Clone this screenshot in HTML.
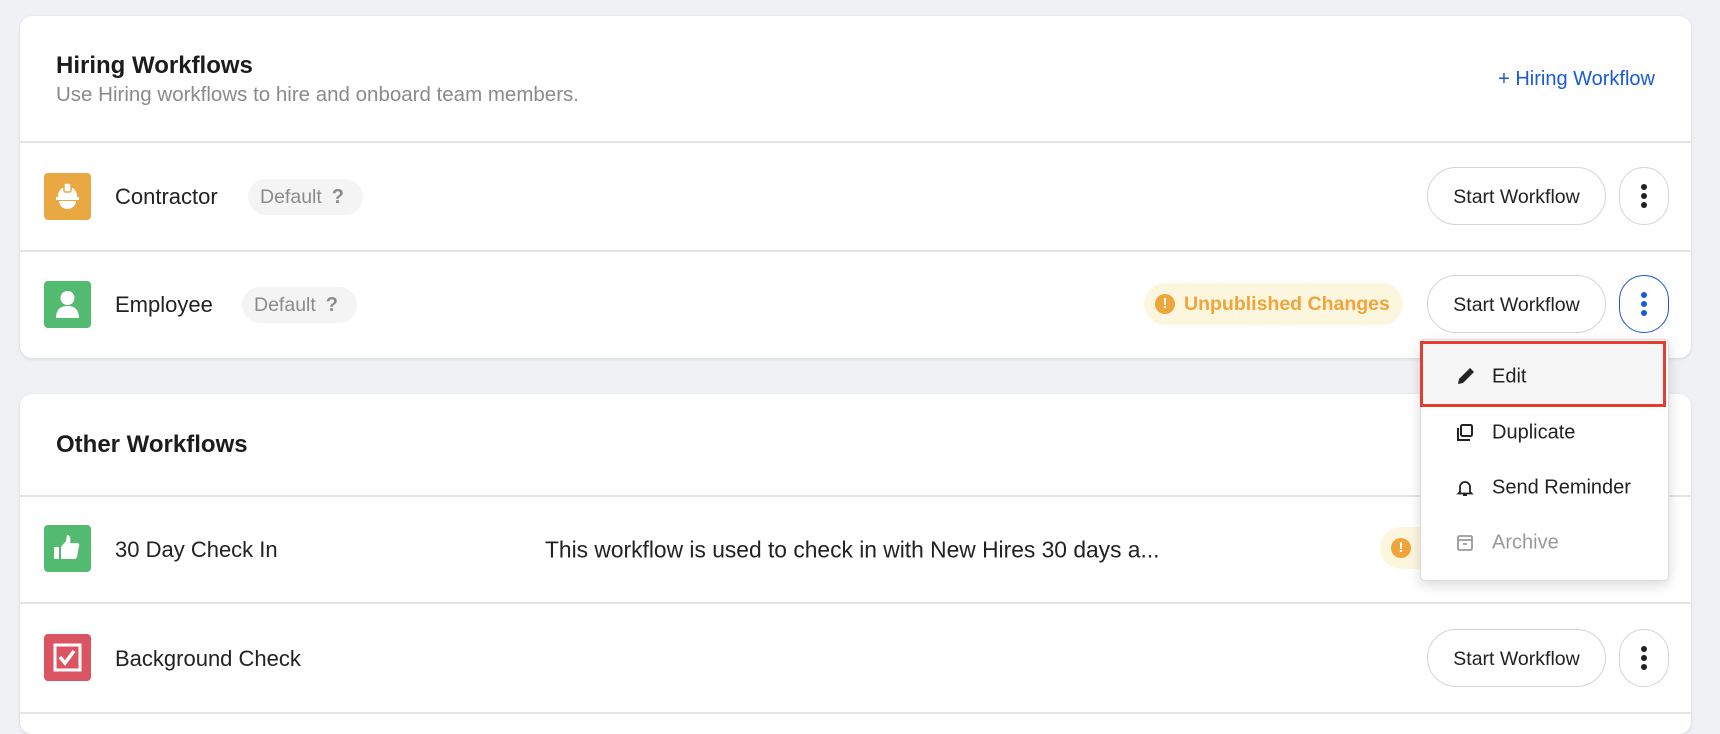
<!DOCTYPE html>
<html><head><meta charset="utf-8"><style>
*{box-sizing:border-box;margin:0;padding:0}
body{width:1720px;height:723px;background:#f0f1f4;font-family:"Liberation Sans",sans-serif;color:#222;position:relative;overflow:hidden}
.card{position:absolute;left:20px;width:1671px;background:#fff;border-radius:12px;box-shadow:0 1px 3px rgba(0,0,0,.12)}
.abs{position:absolute}
.h{font-weight:bold;font-size:24px;color:#1c1c1c}
.div{position:absolute;left:0;right:0;height:2px;background:#e3e4e7}
.icon{position:absolute;left:24px;width:47px;height:47px;border-radius:4px}
.name{position:absolute;left:95px;font-size:22px;color:#222;transform:translateY(-50%)}
.pill{position:absolute;height:36px;border-radius:18px;background:#f4f4f5;color:#8a8a8a;font-size:19.5px;line-height:36px;padding-left:12px;transform:translateY(-50%);width:115px}
.pill b{color:#8a8a8a;margin-left:10px;font-size:20px}
.btn{position:absolute;left:1407px;width:179px;height:58px;border:1.5px solid #d4d4d6;border-radius:29px;font-size:19.5px;text-align:center;line-height:59px;color:#222;transform:translateY(-50%)}
.keb{position:absolute;left:1599px;width:50px;height:58px;border:1.5px solid #d4d4d6;border-radius:25px;transform:translateY(-50%)}
.keb i{position:absolute;left:21px;width:6px;height:6px;border-radius:50%;background:#222}
.warn{position:absolute;height:42px;border-radius:21px;background:#fdf6df;color:#f0a53a;font-weight:bold;font-size:19.5px;line-height:43px;padding-left:40px;transform:translateY(-50%)}
.warn:before{content:"!";position:absolute;left:11px;top:11px;width:20px;height:20px;border-radius:50%;background:#f0a53a;color:#fff;font-size:15px;line-height:20px;text-align:center}
.menu{position:absolute;left:1420px;top:339px;width:249px;height:242px;background:#fff;border:1px solid #dcdcde;border-radius:5px;box-shadow:0 4px 12px rgba(0,0,0,.15)}
.mi{position:absolute;left:71px;font-size:20px;color:#222;transform:translateY(-50%)}
.mic{position:absolute;left:34px;transform:translateY(-50%)}
</style></head><body>
<div class="card" style="top:16px;height:342px">
 <div class="abs h" style="left:36px;top:36px">Hiring Workflows</div>
 <div class="abs" style="left:36px;top:67px;font-size:20.5px;color:#8a8a8a">Use Hiring workflows to hire and onboard team members.</div>
 <div class="abs" style="right:36px;top:52px;font-size:20px;color:#1a5ad7">+ Hiring Workflow</div>
 <div class="div" style="top:125px"></div>
 <div class="icon" style="top:157px;background:#eaa843"><svg width="47" height="47" viewBox="0 0 47 47"><path d="M14 23a9.5 9.5 0 0 1 19 0v1H14z" fill="#fff"/><rect x="20" y="10" width="7" height="9" rx="1.5" fill="#fff" stroke="#eaa843" stroke-width="1.5"/><rect x="12" y="24" width="23" height="3" fill="#fff"/><path d="M15 28h17a8.5 8 0 0 1-17 0z" fill="#fff"/></svg></div>
 <div class="name" style="top:181px">Contractor</div>
 <div class="pill" style="left:228px;top:181px">Default<b>?</b></div>
 <div class="btn" style="top:180px">Start Workflow</div>
 <div class="keb" style="top:180px"><i style="top:16px"></i><i style="top:25px"></i><i style="top:34px"></i></div>
 <div class="div" style="top:234px"></div>
 <div class="icon" style="top:265px;background:#52bb6f"><svg width="47" height="47" viewBox="0 0 47 47"><circle cx="23.5" cy="17" r="7" fill="#fff"/><path d="M12 37c0-9 5-12 11.5-12S35 28 35 37z" fill="#fff"/></svg></div>
 <div class="name" style="top:289px">Employee</div>
 <div class="pill" style="left:222px;top:289px">Default<b>?</b></div>
 <div class="warn" style="left:1124px;top:288px;width:259px">Unpublished Changes</div>
 <div class="btn" style="top:288px">Start Workflow</div>
 <div class="keb" style="top:288px;border-color:#1a5ad7"><i style="top:16px;background:#1a5ad7"></i><i style="top:25px;background:#1a5ad7"></i><i style="top:34px;background:#1a5ad7"></i></div>
</div>
<div class="card" style="top:394px;height:340px">
 <div class="abs h" style="left:36px;top:37px">Other Workflows</div>
 <div class="div" style="top:101px"></div>
 <div class="icon" style="top:131px;background:#52bb6f"><svg width="47" height="47" viewBox="0 0 47 47"><rect x="10" y="22" width="5" height="12" fill="#fff"/><path d="M17 22l5-6 1-6c3 0 4 3 3 8h7c2 0 3 2 2 3l-2 11c-1 2-2 2-3 2H17z" fill="#fff"/></svg></div>
 <div class="name" style="top:156px">30 Day Check In</div>
 <div class="abs" style="left:525px;top:156px;font-size:22.8px;transform:translateY(-50%)">This workflow is used to check in with New Hires 30 days a...</div>
 <div class="warn" style="left:1360px;top:154px;width:200px"></div>
 <div class="div" style="top:208px"></div>
 <div class="icon" style="top:240px;background:#db5461"><svg width="47" height="47" viewBox="0 0 47 47"><rect x="11" y="11" width="25" height="25" fill="none" stroke="#fff" stroke-width="3"/><path d="M16 23l5 6 9-12" fill="none" stroke="#fff" stroke-width="3.5"/></svg></div>
 <div class="name" style="top:265px">Background Check</div>
 <div class="btn" style="top:264px">Start Workflow</div>
 <div class="keb" style="top:264px"><i style="top:16px"></i><i style="top:25px"></i><i style="top:34px"></i></div>
 <div class="div" style="top:318px"></div>
</div>
<div class="menu">
 <div class="abs" style="left:-1px;top:1px;width:246px;height:66px;background:#f6f6f6;border:3px solid #e43d2f"></div>
 <svg class="mic" style="top:37px" width="20" height="20" viewBox="0 0 20 20"><path d="M3 17l1-5 9-9 4 4-9 9z" fill="#222"/><path d="M13 3l2-2 4 4-2 2z" fill="#222"/></svg>
 <div class="mi" style="top:37px">Edit</div>
 <svg class="mic" style="top:93px" width="20" height="20" viewBox="0 0 20 20"><rect x="6" y="2" width="11" height="11" rx="1.5" fill="none" stroke="#222" stroke-width="2"/><path d="M4 6H3v11h11v-1" fill="none" stroke="#222" stroke-width="2"/></svg>
 <div class="mi" style="top:93px">Duplicate</div>
 <svg class="mic" style="top:148px" width="20" height="20" viewBox="0 0 20 20"><path d="M5 14V9a5 5 0 0 1 10 0v5l1.5 1.5h-13z" fill="none" stroke="#222" stroke-width="1.8"/><path d="M8 17h4" stroke="#222" stroke-width="2"/></svg>
 <div class="mi" style="top:148px">Send Reminder</div>
 <svg class="mic" style="top:203px" width="20" height="20" viewBox="0 0 20 20"><rect x="3" y="3" width="14" height="14" rx="1.5" fill="none" stroke="#999" stroke-width="1.8"/><path d="M3 7h14M8 11h4" stroke="#999" stroke-width="1.8"/></svg>
 <div class="mi" style="top:203px;color:#999">Archive</div>
</div>
</body></html>
